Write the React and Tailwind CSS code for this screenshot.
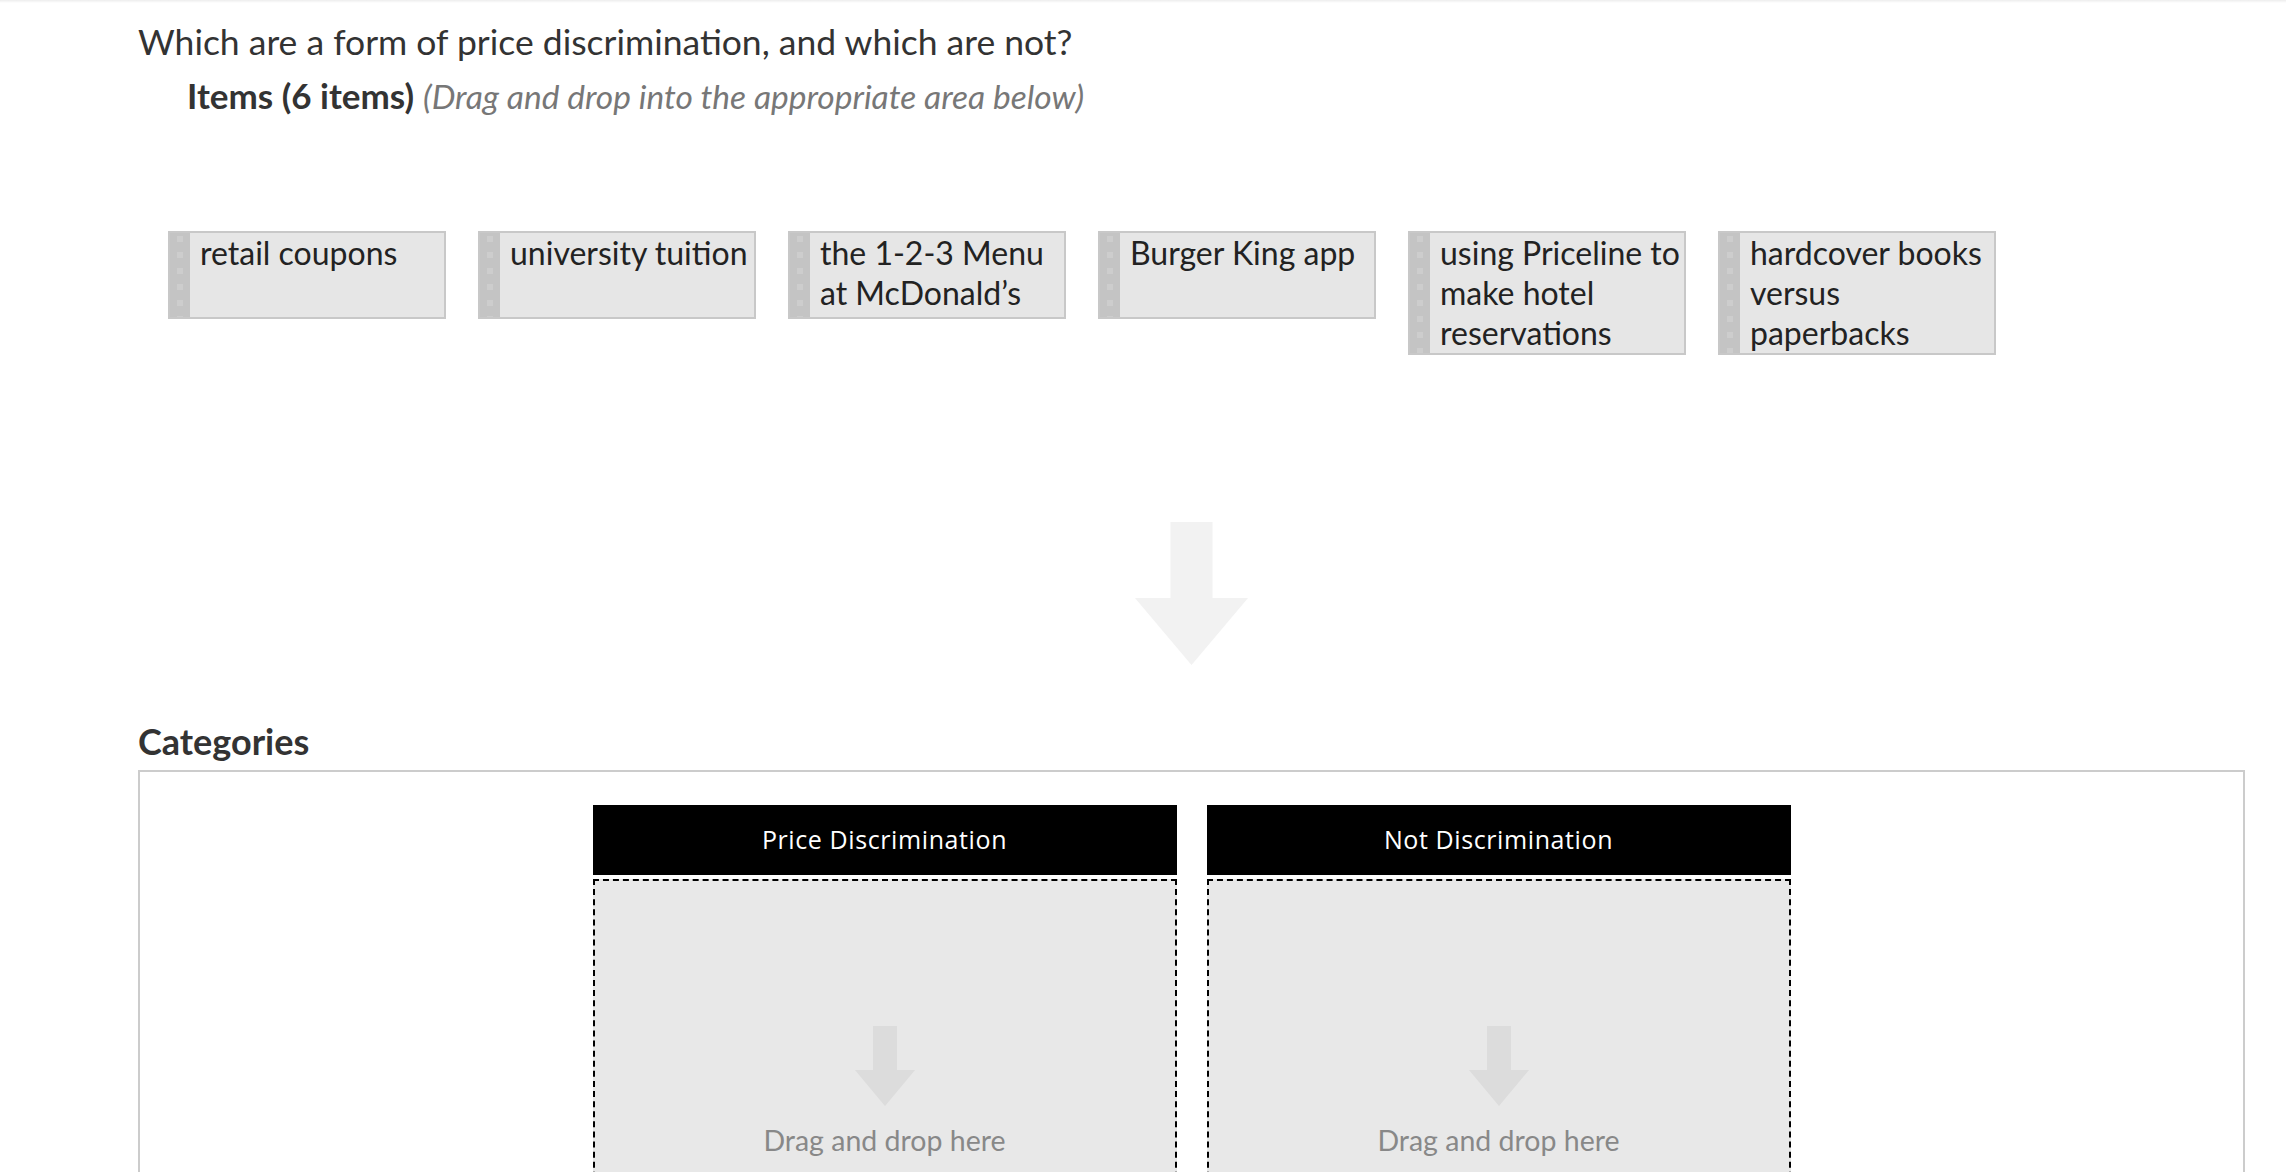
const items = [
  "retail coupons",
  "university tuition",
  "the 1-2-3 Menu at McDonald’s",
  "Burger King app",
  "using Priceline to make hotel reservations",
  "hardcover books versus paperbacks",
];

const categories = ["Price Discrimination", "Not Discrimination"];

function Handle() {
  return (
    <div className="relative w-[20px] shrink-0 self-stretch bg-[#c4c4c4]">
      <div className="absolute inset-0 overflow-hidden flex flex-col items-center gap-[10px] pt-[3px]">
        {[...Array(8)].map((_, i) => (
          <span key={i} className="block w-[6px] h-[6px] shrink-0 bg-[#cdcdcd]" />
        ))}
      </div>
    </div>
  );
}

function ItemCard({ label }) {
  return (
    <div className="w-[278px] min-h-[88px] flex border-2 border-[#c8c8c8] bg-[#e6e6e6]">
      <Handle />
      <div className="pl-[10px] pr-[4px] text-[32px] leading-[40px] text-[#222]">{label}</div>
    </div>
  );
}

function DropColumn({ title }) {
  return (
    <div className="w-[584px] flex flex-col">
      <div className="h-[70px] bg-black text-white flex items-center justify-center font-['Open_Sans',sans-serif] text-[25px] tracking-[0.6px]">
        {title}
      </div>
      <div className="mt-[4px] h-[420px] border-2 border-dashed border-black bg-[#e8e8e8] flex flex-col items-center pt-[145px]">
        <svg width="60" height="80" viewBox="0 0 60 80">
          <polygon points="18,0 42,0 42,44 60,44 30,80 0,44 18,44" fill="#dcdcdc" />
        </svg>
        <div className="mt-[14px] text-[28.5px] leading-[40px] text-[#888]">Drag and drop here</div>
      </div>
    </div>
  );
}

export default function App() {
  return (
    <div className="min-h-screen bg-white font-['Lato',sans-serif] overflow-hidden">
      <div className="h-[3px] bg-gradient-to-b from-[#ededed] to-white" />
      <div className="pl-[138px] pr-[41px]">
        <h1 className="pt-[19px] text-[35.5px] leading-[40px] text-[#333]">
          Which are a form of price discrimination, and which are not?
        </h1>
        <div className="mt-[13px] pl-[49px] text-[35px] leading-[40px]">
          <span className="font-bold text-[#333]">Items (6 items)</span>{" "}
          <span className="italic text-[33.5px] text-[#777]">(Drag and drop into the appropriate area below)</span>
        </div>

        <div className="mt-[115px] pl-[30px] flex items-start gap-[32px]">
          {items.map((t) => (
            <ItemCard key={t} label={t} />
          ))}
        </div>

        <div className="mt-[167px] flex justify-center">
          <svg width="113" height="143" viewBox="0 0 113 143">
            <polygon points="35.5,0 77.5,0 77.5,76 113,76 56.5,143 0,76 35.5,76" fill="#f2f2f2" />
          </svg>
        </div>

        <h2 className="mt-[56px] text-[36px] leading-[40px] font-bold text-[#333]">Categories</h2>
        <div className="mt-[9px] border-2 border-[#cccccc] pt-[33px] pb-[40px] flex justify-center gap-[30px]">
          {categories.map((c) => (
            <DropColumn key={c} title={c} />
          ))}
        </div>
      </div>
    </div>
  );
}
